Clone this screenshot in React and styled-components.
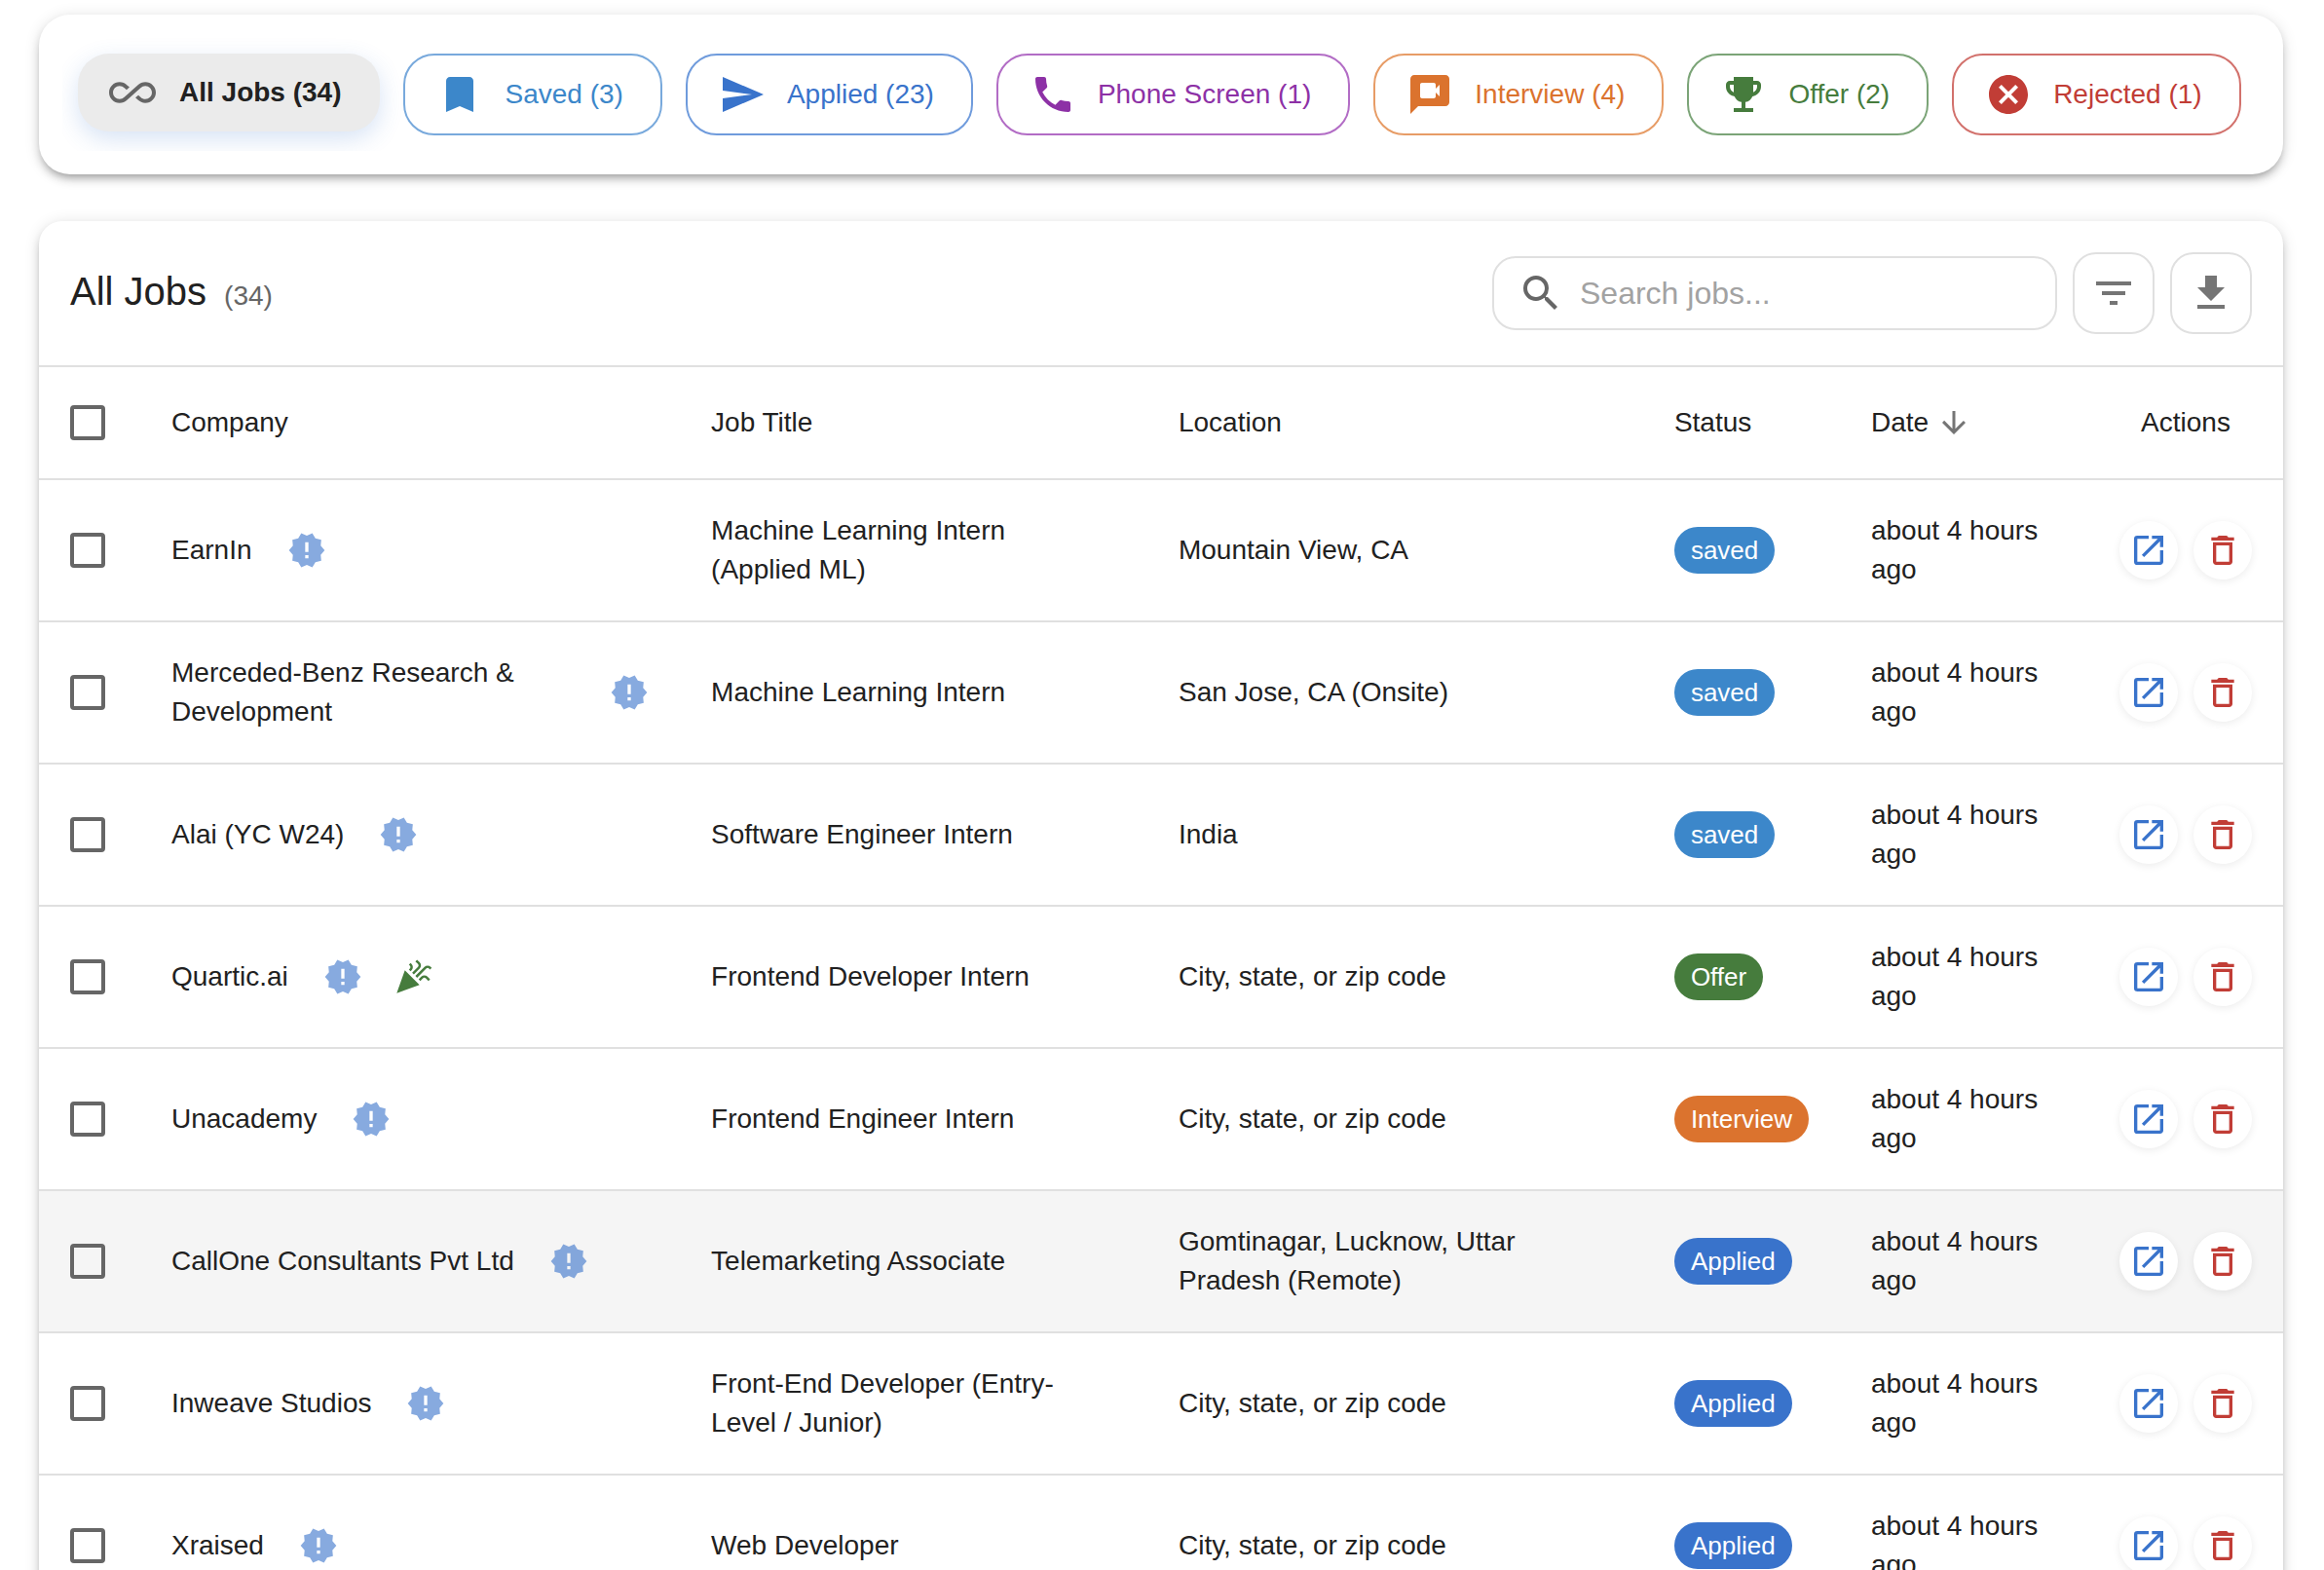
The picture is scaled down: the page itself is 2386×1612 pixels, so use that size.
import { useState } from "react";
import styled, { createGlobalStyle, css } from "styled-components";
import {
  MdAllInclusive,
  MdArrowDownward,
  MdBookmark,
  MdCancel,
  MdCelebration,
  MdDeleteOutline,
  MdEmojiEvents,
  MdFilterList,
  MdGetApp,
  MdNewReleases,
  MdOpenInNew,
  MdPhone,
  MdSearch,
  MdSend,
} from "react-icons/md";

const colors = {
  saved: { main: "#3c87ca", border: "#78a9dc" },
  applied: { main: "#3973cb", border: "#6f9bdc" },
  phone: { main: "#8d31a6", border: "#b26cc5" },
  interview: { main: "#db732e", border: "#e79c66" },
  offer: { main: "#467c3d", border: "#7ba477" },
  rejected: { main: "#c13d36", border: "#d2716c" },
};

const VideoChatIcon = () => (
  <svg viewBox="0 0 24 24" fill="currentColor" aria-hidden="true">
    <path d="M20 2H4c-1.1 0-2 .9-2 2v18l4-4h14c1.1 0 2-.9 2-2V4c0-1.1-.9-2-2-2zm-3 11l-2-2v2c0 .55-.45 1-1 1H8c-.55 0-1-.45-1-1V7c0-.55.45-1 1-1h6c.55 0 1 .45 1 1v2l2-2v6z" />
  </svg>
);

const filters = [
  { key: "saved", label: "Saved (3)", icon: <MdBookmark /> },
  { key: "applied", label: "Applied (23)", icon: <MdSend /> },
  { key: "phone", label: "Phone Screen (1)", icon: <MdPhone /> },
  { key: "interview", label: "Interview (4)", icon: <VideoChatIcon /> },
  { key: "offer", label: "Offer (2)", icon: <MdEmojiEvents /> },
  { key: "rejected", label: "Rejected (1)", icon: <MdCancel /> },
];

const jobs = [
  { company: "EarnIn", title: "Machine Learning Intern (Applied\u00a0ML)", location: "Mountain View, CA", status: "saved", label: "saved" },
  { company: "Merceded-Benz Research & Development", title: "Machine Learning Intern", location: "San Jose, CA (Onsite)", status: "saved", label: "saved" },
  { company: "Alai (YC W24)", title: "Software Engineer Intern", location: "India", status: "saved", label: "saved" },
  { company: "Quartic.ai", title: "Frontend Developer Intern", location: "City, state, or zip code", status: "offer", label: "Offer" },
  { company: "Unacademy", title: "Frontend Engineer Intern", location: "City, state, or zip code", status: "interview", label: "Interview" },
  { company: "CallOne Consultants Pvt Ltd", title: "Telemarketing Associate", location: "Gomtinagar, Lucknow, Uttar Pradesh (Remote)", status: "applied", label: "Applied", active: true },
  { company: "Inweave Studios", title: "Front-End Developer (Entry-Level / Junior)", location: "City, state, or zip code", status: "applied", label: "Applied" },
  { company: "Xraised", title: "Web Developer", location: "City, state, or zip code", status: "applied", label: "Applied" },
];

const App = () => {
  const [search, setSearch] = useState("");

  return (
    <Page>
      <GlobalStyle />
      <FilterCard>
        <FilterList aria-label="Filter by status">
          <AllButton type="button">
            <MdAllInclusive />
            All Jobs (34)
          </AllButton>
          {filters.map(({ key, label, icon }) => (
            <FilterButton key={key} type="button" $color={colors[key]}>
              {icon}
              {label}
            </FilterButton>
          ))}
        </FilterList>
      </FilterCard>

      <TableCard>
        <Toolbar>
          <Title>
            All Jobs <Count>(34)</Count>
          </Title>
          <Tools>
            <SearchBox>
              <MdSearch />
              <SearchInput
                type="text"
                aria-label="Search jobs"
                placeholder="Search jobs..."
                value={search}
                onChange={(e) => setSearch(e.target.value)}
              />
            </SearchBox>
            <ToolButton type="button" aria-label="Filter">
              <MdFilterList />
            </ToolButton>
            <ToolButton type="button" aria-label="Download">
              <MdGetApp />
            </ToolButton>
          </Tools>
        </Toolbar>

        <Table>
          <colgroup>
            <Col $width="104px" />
            <Col $width="24.05%" />
            <Col $width="20.83%" />
            <Col $width="22.09%" />
            <Col $width="8.77%" />
            <Col $width="11.07%" />
            <Col $width="200px" />
          </colgroup>
          <thead>
            <tr>
              <HeadCell>
                <Checkbox type="checkbox" aria-label="Select all jobs" />
              </HeadCell>
              <HeadCell>
                <SortButton type="button">Company</SortButton>
              </HeadCell>
              <HeadCell>
                <SortButton type="button">Job Title</SortButton>
              </HeadCell>
              <HeadCell>
                <SortButton type="button">Location</SortButton>
              </HeadCell>
              <HeadCell>
                <SortButton type="button">Status</SortButton>
              </HeadCell>
              <HeadCell aria-sort="descending">
                <SortButton type="button">
                  Date
                  <MdArrowDownward />
                </SortButton>
              </HeadCell>
              <HeadCell $center>Actions</HeadCell>
            </tr>
          </thead>
          <tbody>
            {jobs.map((job) => (
              <Row key={job.company} $active={job.active}>
                <Cell>
                  <Checkbox type="checkbox" aria-label={`Select ${job.company}`} />
                </Cell>
                <Cell>
                  <Company>
                    <CompanyName>{job.company}</CompanyName>
                    <NewBadge />
                    {job.status === "offer" && <OfferBadge />}
                  </Company>
                </Cell>
                <Cell>{job.title}</Cell>
                <Cell>{job.location}</Cell>
                <Cell>
                  <Chip $color={colors[job.status].main}>{job.label}</Chip>
                </Cell>
                <Cell>about 4 hours ago</Cell>
                <Cell>
                  <Actions>
                    <ActionButton type="button" aria-label="Open job" $color={colors.applied.main}>
                      <MdOpenInNew />
                    </ActionButton>
                    <ActionButton type="button" aria-label="Delete job" $color={colors.rejected.main}>
                      <MdDeleteOutline />
                    </ActionButton>
                  </Actions>
                </Cell>
              </Row>
            ))}
          </tbody>
        </Table>
      </TableCard>
    </Page>
  );
};

const GlobalStyle = createGlobalStyle`
  * {
    box-sizing: border-box;
  }

  html {
    scrollbar-width: none;
  }

  body {
    margin: 0;
    background: #fff;
    color: #212121;
    font-family: "Liberation Sans", Arial, sans-serif;
    font-size: 28px;
    line-height: 40px;
  }

  button,
  input {
    font: inherit;
    color: inherit;
  }

  button {
    cursor: pointer;
  }
`;

const Page = styled.main`
  display: flex;
  flex-direction: column;
  gap: 48px;
  padding: 15px 42px 48px 40px;
`;

const cardStyle = css`
  background: #fff;
  box-shadow:
    0 6px 6px -4px rgba(0, 0, 0, 0.2),
    0 6px 8px rgba(0, 0, 0, 0.14),
    0 2px 16px rgba(0, 0, 0, 0.12);
`;

const FilterCard = styled.section`
  ${cardStyle}
  padding: 24px;
  border-radius: 32px;
`;

const FilterList = styled.nav`
  display: flex;
  align-items: flex-start;
  gap: 24px;
  padding: 16px;
  overflow-x: auto;
  scrollbar-width: none;
`;

const filterStyle = css`
  display: flex;
  align-items: center;
  flex-shrink: 0;
  border-radius: 32px;
  white-space: nowrap;

  svg {
    width: 48px;
    height: 48px;
  }
`;

const AllButton = styled.button`
  ${filterStyle}
  height: 80px;
  gap: 24px;
  padding: 0 40px 0 32px;
  border: none;
  background: #ebebeb;
  font-weight: 700;
  box-shadow: 0 8px 24px rgba(57, 115, 203, 0.2);

  svg {
    color: #666;
  }
`;

const FilterButton = styled.button`
  ${filterStyle}
  height: 84px;
  gap: 22px;
  padding: 0 38px 0 32px;
  border: 2px solid ${({ $color }) => $color.border};
  background: transparent;
  color: ${({ $color }) => $color.main};
`;

const TableCard = styled.section`
  ${cardStyle}
  border-radius: 24px;
`;

const Toolbar = styled.header`
  display: flex;
  align-items: center;
  justify-content: space-between;
  padding: 32px;
  border-bottom: 2px solid #e0e0e0;
`;

const Title = styled.h1`
  display: flex;
  align-items: baseline;
  gap: 18px;
  margin: 0;
  font-size: 40px;
  font-weight: 400;
`;

const Count = styled.span`
  color: #666;
  font-size: 28px;
`;

const Tools = styled.div`
  display: flex;
  align-items: center;
  gap: 16px;
`;

const SearchBox = styled.label`
  display: flex;
  align-items: center;
  gap: 16px;
  width: 580px;
  height: 76px;
  padding: 0 24px;
  border: 2px solid #e0e0e0;
  border-radius: 24px;

  svg {
    width: 48px;
    height: 48px;
    flex-shrink: 0;
    color: #666;
  }
`;

const SearchInput = styled.input`
  flex: 1;
  min-width: 0;
  padding: 0;
  border: none;
  outline: none;
  background: transparent;
  font-size: 32px;

  &::placeholder {
    color: #a2a2a2;
    opacity: 1;
  }
`;

const ToolButton = styled.button`
  display: grid;
  place-content: center;
  width: 84px;
  height: 84px;
  padding: 0;
  border: 2px solid #e0e0e0;
  border-radius: 24px;
  background: transparent;
  color: #757575;

  svg {
    width: 48px;
    height: 48px;
  }
`;

const Table = styled.table`
  width: 100%;
  table-layout: fixed;
  border-collapse: separate;
  border-spacing: 0;
`;

const Col = styled.col`
  width: ${({ $width }) => $width};
`;

const HeadCell = styled.th`
  height: 116px;
  padding: 0 32px;
  border-bottom: 2px solid #e0e0e0;
  font-weight: 400;
  text-align: ${({ $center }) => ($center ? "center" : "left")};
`;

const SortButton = styled.button`
  display: flex;
  align-items: center;
  gap: 8px;
  padding: 0;
  border: none;
  background: transparent;

  svg {
    width: 36px;
    height: 36px;
    color: #757575;
  }
`;

const Row = styled.tr`
  background: ${({ $active }) => ($active ? "#f5f5f5" : "transparent")};
`;

const Cell = styled.td`
  height: 146px;
  padding: 32px;
  border-bottom: 2px solid #e0e0e0;
`;

const Checkbox = styled.input`
  display: block;
  appearance: none;
  width: 36px;
  height: 36px;
  margin: 0;
  border: 4px solid #666;
  border-radius: 4px;
  cursor: pointer;

  &:checked {
    background: #3973cb;
    border-color: #3973cb;
  }
`;

const Company = styled.div`
  display: flex;
  align-items: center;
  gap: 32px;

  svg {
    width: 40px;
    height: 40px;
    flex-shrink: 0;
  }
`;

const CompanyName = styled.span`
  padding-right: 4px;
`;

const NewBadge = styled(MdNewReleases)`
  color: #3973cb;
  opacity: 0.6;
`;

const OfferBadge = styled(MdCelebration)`
  color: #467c3d;
`;

const Chip = styled.span`
  display: inline-flex;
  align-items: center;
  height: 48px;
  padding: 0 17px;
  border-radius: 24px;
  background: ${({ $color }) => $color};
  color: #fff;
  font-size: 26px;
  vertical-align: middle;
`;

const Actions = styled.div`
  display: flex;
  justify-content: center;
  gap: 16px;
`;

const ActionButton = styled.button`
  display: grid;
  place-content: center;
  width: 60px;
  height: 60px;
  padding: 0;
  border: none;
  border-radius: 50%;
  background: #fff;
  color: ${({ $color }) => $color};
  box-shadow: 0 2px 8px rgba(0, 0, 0, 0.08);

  svg {
    width: 40px;
    height: 40px;
  }
`;

export default App;
